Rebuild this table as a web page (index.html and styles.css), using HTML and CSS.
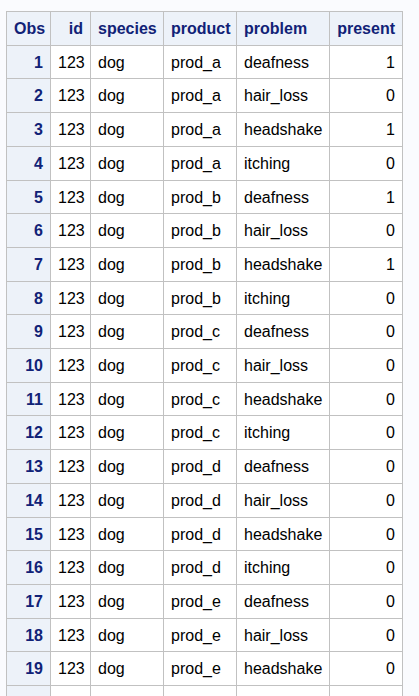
FILE: index.html
```html
<!DOCTYPE html>
<html>
<head>
<meta charset="utf-8">
<link rel="stylesheet" href="styles.css">
</head>
<body>
<div class="wrap">
<table class="tbl">
<colgroup>
<col class="c-obs"><col class="c-id"><col class="c-sp"><col class="c-pr"><col class="c-pb"><col class="c-ps">
</colgroup>
<thead>
<tr><th class="r">Obs</th><th class="r">id</th><th>species</th><th>product</th><th>problem</th><th class="r">present</th></tr>
</thead>
<tbody>
<tr><th class="r">1</th><td class="r">123</td><td>dog</td><td>prod_a</td><td>deafness</td><td class="r">1</td></tr>
<tr><th class="r">2</th><td class="r">123</td><td>dog</td><td>prod_a</td><td>hair_loss</td><td class="r">0</td></tr>
<tr><th class="r">3</th><td class="r">123</td><td>dog</td><td>prod_a</td><td>headshake</td><td class="r">1</td></tr>
<tr><th class="r">4</th><td class="r">123</td><td>dog</td><td>prod_a</td><td>itching</td><td class="r">0</td></tr>
<tr><th class="r">5</th><td class="r">123</td><td>dog</td><td>prod_b</td><td>deafness</td><td class="r">1</td></tr>
<tr><th class="r">6</th><td class="r">123</td><td>dog</td><td>prod_b</td><td>hair_loss</td><td class="r">0</td></tr>
<tr><th class="r">7</th><td class="r">123</td><td>dog</td><td>prod_b</td><td>headshake</td><td class="r">1</td></tr>
<tr><th class="r">8</th><td class="r">123</td><td>dog</td><td>prod_b</td><td>itching</td><td class="r">0</td></tr>
<tr><th class="r">9</th><td class="r">123</td><td>dog</td><td>prod_c</td><td>deafness</td><td class="r">0</td></tr>
<tr><th class="r">10</th><td class="r">123</td><td>dog</td><td>prod_c</td><td>hair_loss</td><td class="r">0</td></tr>
<tr><th class="r">11</th><td class="r">123</td><td>dog</td><td>prod_c</td><td>headshake</td><td class="r">0</td></tr>
<tr><th class="r">12</th><td class="r">123</td><td>dog</td><td>prod_c</td><td>itching</td><td class="r">0</td></tr>
<tr><th class="r">13</th><td class="r">123</td><td>dog</td><td>prod_d</td><td>deafness</td><td class="r">0</td></tr>
<tr><th class="r">14</th><td class="r">123</td><td>dog</td><td>prod_d</td><td>hair_loss</td><td class="r">0</td></tr>
<tr><th class="r">15</th><td class="r">123</td><td>dog</td><td>prod_d</td><td>headshake</td><td class="r">0</td></tr>
<tr><th class="r">16</th><td class="r">123</td><td>dog</td><td>prod_d</td><td>itching</td><td class="r">0</td></tr>
<tr><th class="r">17</th><td class="r">123</td><td>dog</td><td>prod_e</td><td>deafness</td><td class="r">0</td></tr>
<tr><th class="r">18</th><td class="r">123</td><td>dog</td><td>prod_e</td><td>hair_loss</td><td class="r">0</td></tr>
<tr><th class="r">19</th><td class="r">123</td><td>dog</td><td>prod_e</td><td>headshake</td><td class="r">0</td></tr>
<tr><th class="r"></th><td class="r"></td><td></td><td></td><td></td><td class="r"></td></tr>
</tbody>
</table>
</div>
</body>
</html>
```
FILE: styles.css
```css
html, body {
  margin: 0;
  padding: 0;
  background: #fafbfe;
  height: 696px;
  overflow: hidden;
}
.wrap {
  padding: 11px 0 0 6px;
}
.tbl {
  border-collapse: collapse;
  table-layout: fixed;
  width: 396px;
  font-family: "Liberation Sans", Arial, sans-serif;
  font-size: 16px;
  border: 1px solid #c1c1c1;
}
.c-obs { width: 44px; }
.c-id { width: 40px; }
.c-sp { width: 73px; }
.c-pr { width: 73px; }
.c-pb { width: 93px; }
.c-ps { width: 73px; }
.tbl th, .tbl td {
  border: 1px solid #c1c1c1;
  padding: 8px 7px 6px 7px;
  line-height: 18.7px;
  height: 18.7px;
  text-align: left;
  white-space: nowrap;
  overflow: hidden;
}
.tbl th {
  background: #edf2f9;
  color: #112277;
  font-weight: bold;
}
.tbl td {
  background: #ffffff;
  color: #000000;
}
.tbl .r {
  text-align: right;
}
```
